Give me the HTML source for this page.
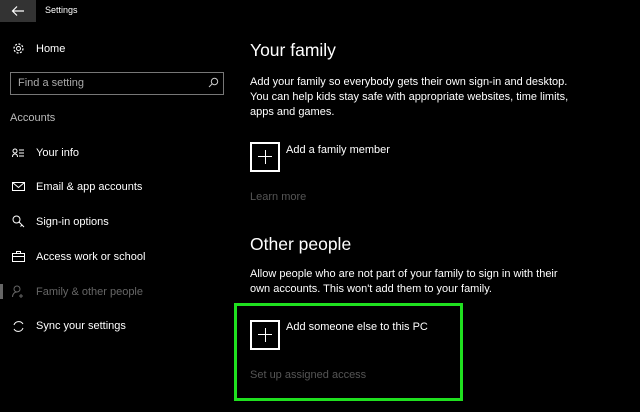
<!DOCTYPE html>
<html><head><style>
*{margin:0;padding:0;box-sizing:border-box}
body{width:640px;height:412px;background:#000;color:#fff;font-family:"Liberation Sans",sans-serif;position:relative;overflow:hidden}
.a{position:absolute;white-space:nowrap}
.t{font-size:11px;line-height:15px}
.plus{position:absolute;width:30px;height:30px;border:2px solid #fff}
.plus:before{content:"";position:absolute;left:6px;top:12px;width:14px;height:1px;background:#fff}
.plus:after{content:"";position:absolute;left:12.5px;top:6px;width:1px;height:14px;background:#fff}
svg{position:absolute}
</style></head><body>
<div class="a" style="left:0;top:0;width:36px;height:22px;background:#333"></div>
<svg style="left:11px;top:5px" width="14" height="12" viewBox="0 0 14 12"><path d="M13 6H2M6 1.5L1.5 6 6 10.5" stroke="#fff" stroke-width="1.2" fill="none"/></svg>
<div class="a" style="left:45px;top:5px;font-size:9px">Settings</div>

<svg style="left:12px;top:42px" width="13" height="13" viewBox="0 0 13 13"><circle cx="6.5" cy="6.5" r="4.5" stroke="#fff" stroke-width="1.2" fill="none" stroke-dasharray="2 1.5"/><circle cx="6.5" cy="6.5" r="2" stroke="#fff" fill="none"/></svg>
<div class="a t" style="left:36px;top:42px">Home</div>
<div class="a" style="left:10px;top:72px;width:214px;height:23px;border:1px solid #777"></div>
<div class="a t" style="left:18px;top:76px;color:#aaa">Find a setting</div>
<svg style="left:208px;top:77px" width="11" height="11" viewBox="0 0 11 11"><circle cx="6.5" cy="4.5" r="3.2" stroke="#ccc" fill="none"/><path d="M4.2 6.8L1 10" stroke="#ccc"/></svg>
<div class="a t" style="left:10px;top:111px;color:#bbb">Accounts</div>

<svg style="left:12px;top:148px" width="13" height="10" viewBox="0 0 13 10"><circle cx="3" cy="3" r="2" stroke="#fff" fill="none"/><path d="M0.5 9c0-2 1-3 2.5-3s2.5 1 2.5 3M7 2h5M7 5h5M7 8h5" stroke="#fff" fill="none"/></svg>
<div class="a t" style="left:36px;top:146px">Your info</div>
<svg style="left:12px;top:182px" width="13" height="10" viewBox="0 0 13 10"><rect x=".5" y=".5" width="12" height="8" stroke="#fff" fill="none"/><path d="M.5 .5l6 5 6-5" stroke="#fff" fill="none"/></svg>
<div class="a t" style="left:36px;top:180px">Email &amp; app accounts</div>
<svg style="left:12px;top:215px" width="13" height="13" viewBox="0 0 13 13"><circle cx="4.5" cy="4.5" r="3.5" stroke="#fff" fill="none"/><path d="M7 7l5 5M10 10l-1.5 1.5" stroke="#fff" fill="none"/></svg>
<div class="a t" style="left:36px;top:215px">Sign-in options</div>
<svg style="left:12px;top:251px" width="13" height="11" viewBox="0 0 13 11"><rect x=".5" y="2.5" width="12" height="8" stroke="#fff" fill="none"/><path d="M4.5 2.5V.5h4v2M.5 5.5h12" stroke="#fff" fill="none"/></svg>
<div class="a t" style="left:36px;top:250px">Access work or school</div>
<div class="a" style="left:0;top:284px;width:3px;height:15px;background:#666"></div>
<svg style="left:12px;top:285px" width="13" height="13" viewBox="0 0 13 13"><circle cx="5" cy="4" r="3" stroke="#666" fill="none"/><path d="M.5 12c0-3 2-5 4.5-5M9 9v4M7 11h4" stroke="#666" fill="none"/></svg>
<div class="a t" style="left:36px;top:285px;color:#666">Family &amp; other people</div>
<svg style="left:12px;top:320px" width="13" height="13" viewBox="0 0 13 13"><path d="M2 5a5 5 0 0 1 9-1M11 8a5 5 0 0 1-9 1" stroke="#fff" fill="none"/></svg>
<div class="a t" style="left:36px;top:319px">Sync your settings</div>

<div class="a" style="left:250px;top:40px;font-size:17.5px">Your family</div>
<div class="a t" style="left:250px;top:75px">Add your family so everybody gets their own sign-in and desktop.<br>You can help kids stay safe with appropriate websites, time limits,<br>apps and games.</div>
<div class="plus" style="left:250px;top:142px"></div>
<div class="a t" style="left:286px;top:143px">Add a family member</div>
<div class="a t" style="left:250px;top:190px;color:#555">Learn more</div>
<div class="a" style="left:250px;top:234px;font-size:17.5px">Other people</div>
<div class="a t" style="left:250px;top:267px">Allow people who are not part of your family to sign in with their<br>own accounts. This won't add them to your family.</div>
<div class="a" style="left:234px;top:303px;width:229px;height:98px;border:3px solid #1fe01f"></div>
<div class="plus" style="left:250px;top:320px"></div>
<div class="a t" style="left:286px;top:320px">Add someone else to this PC</div>
<div class="a t" style="left:250px;top:368px;color:#555">Set up assigned access</div>
</body></html>
